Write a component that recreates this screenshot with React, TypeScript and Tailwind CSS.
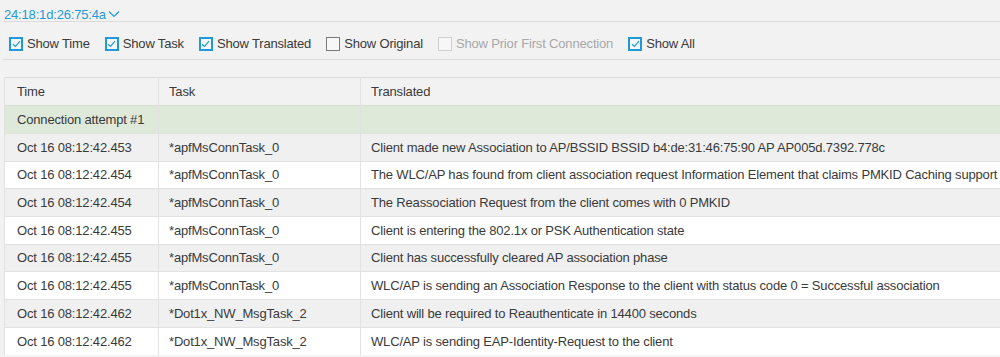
import React from "react";

const options = [
  { label: "Show Time", state: "on" },
  { label: "Show Task", state: "on" },
  { label: "Show Translated", state: "on" },
  { label: "Show Original", state: "off" },
  { label: "Show Prior First Connection", state: "disabled" },
  { label: "Show All", state: "on" },
];

const rows = [
  ["Oct 16 08:12:42.453", "*apfMsConnTask_0", "Client made new Association to AP/BSSID BSSID b4:de:31:46:75:90 AP AP005d.7392.778c"],
  ["Oct 16 08:12:42.454", "*apfMsConnTask_0", "The WLC/AP has found from client association request Information Element that claims PMKID Caching support"],
  ["Oct 16 08:12:42.454", "*apfMsConnTask_0", "The Reassociation Request from the client comes with 0 PMKID"],
  ["Oct 16 08:12:42.455", "*apfMsConnTask_0", "Client is entering the 802.1x or PSK Authentication state"],
  ["Oct 16 08:12:42.455", "*apfMsConnTask_0", "Client has successfully cleared AP association phase"],
  ["Oct 16 08:12:42.455", "*apfMsConnTask_0", "WLC/AP is sending an Association Response to the client with status code 0 = Successful association"],
  ["Oct 16 08:12:42.462", "*Dot1x_NW_MsgTask_2", "Client will be required to Reauthenticate in 14400 seconds"],
  ["Oct 16 08:12:42.462", "*Dot1x_NW_MsgTask_2", "WLC/AP is sending EAP-Identity-Request to the client"],
];

function Checkbox({ state }: { state: string }) {
  if (state === "on") {
    return (
      <span className="w-[14px] h-[14px] border-2 border-[#1e9ad6] bg-[#f7f7f7] flex items-center justify-center shrink-0">
        <svg width="9" height="8" viewBox="0 0 9 8" fill="none">
          <path d="M1 4.2 L3.5 6.5 L8 1.2" stroke="#1e9ad6" strokeWidth="1.2" />
        </svg>
      </span>
    );
  }
  return (
    <span
      className={`w-[14px] h-[14px] border shrink-0 bg-[#f7f7f7] ${
        state === "disabled" ? "border-[#cfcfcf]" : "border-[#7a7a7a]"
      }`}
    />
  );
}

export default function App() {
  return (
    <div className="h-[357px] w-[1000px] overflow-hidden bg-[#f2f2f2] text-[13px] tracking-[-0.17px] text-[#3a3a3a] font-['Liberation_Sans',Arial,sans-serif]">
      <div className="pt-[5px] h-[22px] flex items-start border-b border-[#dcdcdc] ml-[3px]">
        <span className="text-[#1e9ad6] ml-[1px]">24:18:1d:26:75:4a</span>
        <svg className="mt-[5px] ml-[2px]" width="12" height="8" viewBox="0 0 12 8" fill="none">
          <path d="M1 1.5 L6 6.5 L11 1.5" stroke="#1e9ad6" strokeWidth="1.2" />
        </svg>
      </div>

      <div className="flex items-start gap-[15px] h-[38px] pt-[15px] pl-[6px] border-b border-[#dcdcdc] ml-[3px]">
        {options.map((o) => (
          <label key={o.label} className="flex items-center gap-[4px] h-[14px]">
            <Checkbox state={o.state} />
            <span className={o.state === "disabled" ? "text-[#a8a8a8]" : ""}>{o.label}</span>
          </label>
        ))}
      </div>

      <div className="pl-[4px] pt-[17px]">
        <table className="table-fixed border-collapse w-[1100px]">
          <colgroup>
            <col className="w-[154px]" />
            <col className="w-[202px]" />
            <col />
          </colgroup>
          <thead>
            <tr className="h-[28px] bg-[#f2f2f2] border-t border-[#dcdcdc]">
              <th className="font-normal text-left pl-[12px] border-l border-r border-[#e2e2e2]">Time</th>
              <th className="font-normal text-left pl-[10px] border-r border-[#e2e2e2]">Task</th>
              <th className="font-normal text-left pl-[10px]">Translated</th>
            </tr>
          </thead>
          <tbody>
            <tr className="h-[28px] bg-[#dfe9d9] border-t border-[#d6dfd0]">
              <td className="pl-[12px] border-l border-r border-[#e2e2e2] whitespace-nowrap">Connection attempt #1</td>
              <td className="border-r border-[#e2e2e2]" />
              <td />
            </tr>
            {rows.map((r, i) => (
              <tr
                key={i}
                className={`h-[27.7px] border-t border-[#e2e2e2] ${i % 2 === 0 ? "bg-[#f0f0f0]" : "bg-white"}`}
              >
                <td className="pl-[12px] border-l border-r border-[#e2e2e2] whitespace-nowrap">{r[0]}</td>
                <td className="pl-[10px] border-r border-[#e2e2e2] whitespace-nowrap">{r[1]}</td>
                <td className="pl-[10px] whitespace-nowrap">{r[2]}</td>
              </tr>
            ))}
          </tbody>
        </table>
      </div>
    </div>
  );
}
